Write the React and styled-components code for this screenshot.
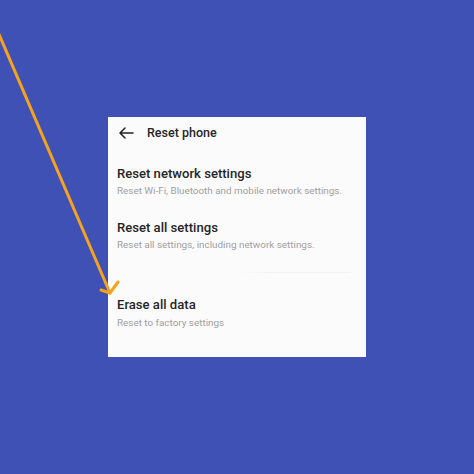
import React from 'react';
import styled, { createGlobalStyle } from 'styled-components';

const GlobalStyle = createGlobalStyle`
  html, body {
    margin: 0;
    padding: 0;
    background: #3f51b5;
  }
  * {
    box-sizing: border-box;
  }
`;

const Page = styled.div`
  position: relative;
  width: 474px;
  height: 474px;
  background: #3f51b5;
  padding: 117px 0 0 108px;
  font-family: Roboto, 'Noto Sans', sans-serif;
  overflow: hidden;
`;

const Panel = styled.div`
  width: 258px;
  height: 240px;
  background: #fbfbfb;
  padding: 0 9px;
  display: flex;
  flex-direction: column;
`;

const Header = styled.div`
  height: 31px;
  padding-top: 1px;
  display: flex;
  align-items: center;
  gap: 13px;
  padding-left: 1px;
  color: #222;
`;

const Title = styled.div`
  font-size: 12.5px;
  font-weight: 500;
  color: #262626;
  line-height: 16px;
`;

const Item = styled.div`
  margin-top: ${(p) => p.$top}px;
  display: flex;
  flex-direction: column;
  gap: ${(p) => p.$gap || 3}px;
`;

const ItemTitle = styled.div`
  font-size: 13.1px;
  font-weight: 500;
  color: #262626;
  line-height: 16px;
`;

const ItemSub = styled.div`
  font-size: 9.9px;
  color: #a0a0a0;
  line-height: 12px;
  white-space: nowrap;
`;

const Divider = styled.div`
  height: 1px;
  margin: 21px 0 0 120px;
  background: linear-gradient(to right, #fbfbfb, #f2f2f2 30%, #f2f2f2 90%, #fbfbfb);
`;

const Overlay = styled.svg`
  position: absolute;
  left: 0;
  top: 0;
  pointer-events: none;
`;

const items = [
  { title: 'Reset network settings', sub: 'Reset Wi-Fi, Bluetooth and mobile network settings.', top: 18 },
  { title: 'Reset all settings', sub: 'Reset all settings, including network settings.', top: 23 },
];

export default function App() {
  return (
    <Page>
      <GlobalStyle />
      <Panel>
        <Header>
          <svg width="16" height="12" viewBox="0 0 16 12">
            <path d="M15 6H2M7 1L2 6l5 5" fill="none" stroke="#222" strokeWidth="1.5" strokeLinecap="round" strokeLinejoin="round" />
          </svg>
          <Title>Reset phone</Title>
        </Header>
        {items.map((it) => (
          <Item key={it.title} $top={it.top}>
            <ItemTitle>{it.title}</ItemTitle>
            <ItemSub>{it.sub}</ItemSub>
          </Item>
        ))}
        <Divider />
        <Item $top={24} $gap={4}>
          <ItemTitle>Erase all data</ItemTitle>
          <ItemSub>Reset to factory settings</ItemSub>
        </Item>
      </Panel>
      <Overlay width="474" height="474" viewBox="0 0 474 474">
        <g fill="none" stroke="#f5a21f" strokeWidth="3" strokeLinecap="round" strokeLinejoin="round">
          <path d="M-2 32L110 293" />
          <path d="M101 290L110 293L118 282" />
        </g>
      </Overlay>
    </Page>
  );
}
